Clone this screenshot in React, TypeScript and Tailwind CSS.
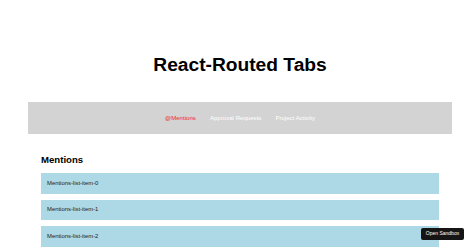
import React from 'react'

const tabs = ['@Mentions', 'Approval Requests', 'Project Activity']
const items = ['Mentions-list-item-0', 'Mentions-list-item-1', 'Mentions-list-item-2']

export default function App() {
  return (
    <div className="relative h-[248px] w-[474px] overflow-hidden bg-white font-['Liberation_Sans',Arial,sans-serif] text-black">
      <div className="pl-[28px] pr-[22px]">
        <h1 className="pt-[55px] text-center text-[19.2px] font-bold leading-[20px]">React-Routed Tabs</h1>

        <nav className="mt-[27px] flex h-[32px] items-center justify-center gap-[14px] bg-[#d3d3d3] text-[6.1px]">
          {tabs.map((t, i) => (
            <span key={t} className={i === 0 ? 'text-[#f02828]' : 'text-white'}>
              {t}
            </span>
          ))}
        </nav>

        <div className="px-[13px]">
          <h2 className="mt-[21px] text-[9.6px] font-bold leading-[10px]">Mentions</h2>
          <ul className="mt-[8px] flex flex-col gap-[6px]">
            {items.map((it) => (
              <li key={it} className="flex h-[20.5px] items-center bg-[#add8e6] pl-[6px] text-[5.9px] text-[#222]">
                {it}
              </li>
            ))}
          </ul>
        </div>
      </div>

      <button className="absolute left-[421px] top-[228px] flex h-[12px] w-[43px] items-center justify-center rounded-[2px] bg-[#151515] text-[5px] text-white">
        Open Sandbox
      </button>
    </div>
  )
}
